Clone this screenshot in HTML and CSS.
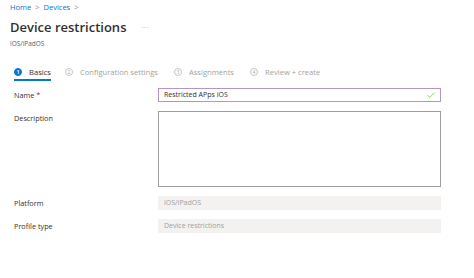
FILE: index.html
```html
<!DOCTYPE html>
<html>
<head>
    <meta name='viewport' content='width=device-width, initial-scale=1.0'>
    <title>Device restrictions</title>
    <link rel="stylesheet" href="styles.css">
</head>
<body>
    <div class='crumbs'>
        <a href='#'>Home</a><span class='sep'>&gt;</span><a href='#'>Devices</a><span class='sep'>&gt;</span>
    </div>
    <div class='title-row'>
        <h1>Device restrictions</h1>
        <span class='more'>&middot;&middot;&middot;</span>
    </div>
    <div class='subtitle'>iOS/iPadOS</div>

    <div class='steps'>
        <div class='step active'><span class='num'>1</span>Basics</div>
        <div class='step'><span class='num'>2</span>Configuration settings</div>
        <div class='step'><span class='num'>3</span>Assignments</div>
        <div class='step'><span class='num'>4</span>Review + create</div>
    </div>

    <div class='form'>
        <div class='row'>
            <label>Name <span class='req'>*</span></label>
            <div class='field name-field'>
                <span>Restricted APps iOS</span>
                <svg class='check' width='8' height='6' viewBox='0 0 8 6'><path d='M0.5 3.2 L2.8 5.3 L7.5 0.6' fill='none' stroke='#8bbf6a' stroke-width='0.9'/></svg>
            </div>
        </div>
        <div class='row'>
            <label>Description</label>
            <div class='field textarea'></div>
        </div>
        <div class='row'>
            <label>Platform</label>
            <div class='field disabled'>iOS/iPadOS</div>
        </div>
        <div class='row'>
            <label>Profile type</label>
            <div class='field disabled'>Device restrictions</div>
        </div>
    </div>
</body>
</html>
```

FILE: styles.css
```css
body {
    font-family: "Open Sans", "Noto Sans", sans-serif;
    margin: 0;
    padding: 0 0 0 10px;
    background-color: white;
    color: #323130;
}
.crumbs {
    font-size: 7.5px;
    padding-top: 1px;
    height: 12px;
    line-height: 12px;
}
.crumbs a {
    color: #0078d4;
    text-decoration: none;
}
.sep {
    color: #8a8886;
    margin: 0 4px;
}
.title-row {
    display: flex;
    align-items: center;
    height: 26px;
    padding-top: 1px;
}
h1 {
    font-size: 13px;
    font-weight: 600;
    margin: 0;
}
.more {
    font-size: 7px;
    color: #a19f9d;
    margin-left: 15px;
    letter-spacing: 0.5px;
}
.subtitle {
    font-size: 6.5px;
    color: #605e5c;
    line-height: 8px;
}
.steps {
    display: flex;
    margin-top: 17px;
    margin-left: 4px;
    height: 17px;
}
.step {
    display: flex;
    align-items: center;
    font-size: 7.6px;
    color: #a19f9d;
    margin-right: 16px;
    height: 14px;
}
.step.active {
    color: #323130;
    border-bottom: 2px solid #0078d4;
    margin-right: 14px;
}
.num {
    width: 6px;
    height: 6px;
    border: 1px solid #c8c6c4;
    border-radius: 50%;
    font-size: 4.5px;
    display: flex;
    align-items: center;
    justify-content: center;
    margin-right: 7px;
}
.active .num {
    background-color: #0078d4;
    border-color: #0078d4;
    color: white;
    font-weight: 700;
}
.form {
    margin-left: 4px;
    margin-top: 6px;
}
.row {
    display: flex;
    margin-bottom: 9px;
}
label {
    width: 144px;
    font-size: 7.3px;
    color: #323130;
    line-height: 14px;
}
.req {
    color: #a4262c;
}
.field {
    width: 283px;
    height: 14px;
    box-sizing: border-box;
    font-size: 7px;
    padding: 0 5px;
    line-height: 12px;
    border: 1px solid #8a8886;
}
.name-field {
    display: flex;
    justify-content: space-between;
    align-items: center;
    border-color: #b196c9;
}
.textarea {
    height: 76px;
    border-color: #a19f9d;
}
.disabled {
    background-color: #f3f2f1;
    border-color: #f3f2f1;
    color: #a19f9d;
}
```
